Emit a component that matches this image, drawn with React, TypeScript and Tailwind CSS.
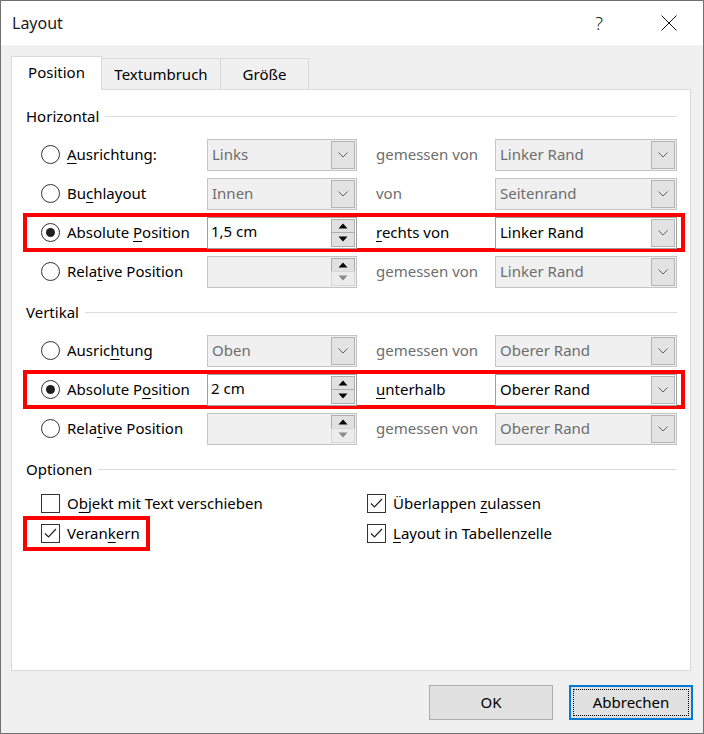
import React from "react";

// Kleine Helfer für die Dialog-Steuerelemente
function Mn({ t, k }: { t: string; k: number }) {
  return (
    <span>
      {t.slice(0, k)}
      <span className="underline decoration-1 underline-offset-[3px]">{t[k]}</span>
      {t.slice(k + 1)}
    </span>
  );
}

function Chevron() {
  return (
    <svg width="10" height="6" viewBox="0 0 10 6">
      <path d="M0.5 0.5 L5 5 L9.5 0.5" fill="none" stroke="#606060" strokeWidth="1" />
    </svg>
  );
}

function Tri({ up, color }: { up?: boolean; color: string }) {
  return (
    <svg width="10" height="6" viewBox="0 0 10 6">
      <path d={up ? "M0.5 5.5 L5 0.5 L9.5 5.5 Z" : "M0.5 0.5 L5 5.5 L9.5 0.5 Z"} fill={color} />
    </svg>
  );
}

function Radio({ checked }: { checked?: boolean }) {
  return (
    <div className="flex h-[19px] w-[19px] shrink-0 items-center justify-center rounded-full border border-[#333333] bg-white">
      {checked && <div className="h-[9px] w-[9px] rounded-full bg-[#1f1f1f]" />}
    </div>
  );
}

function Check({ checked }: { checked?: boolean }) {
  return (
    <div className="flex h-[19px] w-[19px] shrink-0 items-center justify-center border border-[#333333] bg-white">
      {checked && (
        <svg width="15" height="15" viewBox="0 0 15 15">
          <path d="M2 7.5 L5.5 11 L13 3" fill="none" stroke="#222222" strokeWidth="1.2" />
        </svg>
      )}
    </div>
  );
}

function Combo({ value, active, w }: { value: string; active?: boolean; w: string }) {
  return (
    <div
      className={`flex h-[32px] shrink-0 items-stretch border ${w} ${
        active ? "border-[#a0a0a0] bg-white text-black" : "border-[#c4c4c4] bg-[#f0f0f0] text-[#6d6d6d]"
      }`}
    >
      <span className="flex flex-1 items-center pl-[4px]">{value}</span>
      <div className="my-[1px] mr-[1px] flex w-[24px] items-center justify-center border border-[#b5b5b5] bg-[#e3e3e3]">
        <Chevron />
      </div>
    </div>
  );
}

function Spin({ value, disabled }: { value?: string; disabled?: boolean }) {
  return (
    <div
      className={`flex h-[32px] w-[150px] shrink-0 items-stretch border ${
        disabled ? "border-[#c4c4c4] bg-[#f0f0f0]" : "border-[#a0a0a0] bg-white"
      }`}
    >
      <span className="flex flex-1 items-center pb-[2px] pl-[3px] text-black">{value}</span>
      <div className="my-[1px] mr-[1px] flex w-[24px] flex-col">
        <div className="flex flex-1 items-center justify-center border border-[#adadad] bg-[#e1e1e1]">
          <Tri up color="#000000" />
        </div>
        <div
          className={`-mt-px flex flex-1 items-center justify-center border ${
            disabled ? "border-[#d6d6d6] bg-[#ececec]" : "border-[#adadad] bg-[#e1e1e1]"
          }`}
        >
          <Tri color={disabled ? "#8a8a8a" : "#000000"} />
        </div>
      </div>
    </div>
  );
}

function Row({
  hl,
  radio,
  label,
  field,
  label2,
  label2Active,
  field2,
}: {
  hl?: boolean;
  radio?: boolean;
  label: React.ReactNode;
  field: React.ReactNode;
  label2: React.ReactNode;
  label2Active?: boolean;
  field2: React.ReactNode;
}) {
  return (
    <div
      className={`ml-[11px] flex h-[39px] w-[662px] items-center border-4 ${
        hl ? "border-[#ff0000]" : "border-transparent"
      }`}
    >
      <div className="flex w-[180px] shrink-0 items-center gap-[7px] pl-[14px]">
        <Radio checked={radio} />
        <span className="whitespace-nowrap">{label}</span>
      </div>
      {field}
      <div
        className={`w-[138px] shrink-0 whitespace-nowrap pl-[19px] ${
          label2Active ? "text-black" : "text-[#6d6d6d]"
        }`}
      >
        {label2}
      </div>
      {field2}
    </div>
  );
}

function GroupHeader({ title, className }: { title: string; className?: string }) {
  return (
    <div className={`flex h-[22px] items-center pl-[14px] pr-[13px] ${className ?? ""}`}>
      <span>{title}</span>
      <div className="ml-[6px] h-px flex-1 bg-[#dcdcdc]" />
    </div>
  );
}

function CheckItem({ checked, label, hl }: { checked?: boolean; label: React.ReactNode; hl?: boolean }) {
  return (
    <div
      className={`flex h-[35px] items-center gap-[7px] border-4 pl-[14px] pr-[6px] ${
        hl ? "border-[#ff0000]" : "border-transparent"
      }`}
    >
      <Check checked={checked} />
      <span className="whitespace-nowrap">{label}</span>
    </div>
  );
}

export default function App() {
  return (
    <div className="flex h-[734px] w-[704px] flex-col border border-[#707070] bg-[#f0f0f0] font-['Noto_Sans',sans-serif] text-[15px] text-black">
      {/* Titelleiste */}
      <div className="flex h-[44px] shrink-0 items-center bg-white pl-[11px]">
        <span className="text-[16px] text-[#1a1a1a]">Layout</span>
        <span className="ml-auto text-[18px] font-light text-[#222222]">?</span>
        <div className="ml-[58px] mr-[26px]">
          <svg width="16" height="16" viewBox="0 0 16 16">
            <path d="M0.5 0.5 L15.5 15.5 M15.5 0.5 L0.5 15.5" stroke="#111111" strokeWidth="1" />
          </svg>
        </div>
      </div>

      {/* Registerkarten */}
      <div className="flex h-[44px] shrink-0 items-end pl-[10px]">
        <div className="relative z-10 -mb-px flex h-[34px] w-[91px] items-center justify-center border border-b-0 border-[#d9d9d9] bg-white pb-[2px]">
          Position
        </div>
        <div className="flex h-[31px] w-[119px] items-center justify-center border-t border-r border-[#d9d9d9]">
          Textumbruch
        </div>
        <div className="flex h-[31px] w-[88px] items-center justify-center border-t border-r border-[#d9d9d9]">
          Größe
        </div>
      </div>

      {/* Inhalt */}
      <div className="ml-[10px] h-[582px] w-[680px] shrink-0 border border-[#d9d9d9] bg-white pt-[15px]">
        <GroupHeader title="Horizontal" />
        <div className="mt-[8px]">
          <Row
            label={<Mn t="Ausrichtung:" k={0} />}
            field={<Combo value="Links" w="w-[150px]" />}
            label2="gemessen von"
            field2={<Combo value="Linker Rand" w="w-[182px]" />}
          />
          <Row
            label={<Mn t="Buchlayout" k={2} />}
            field={<Combo value="Innen" w="w-[150px]" />}
            label2="von"
            field2={<Combo value="Seitenrand" w="w-[182px]" />}
          />
          <Row
            hl
            radio
            label={<Mn t="Absolute Position" k={9} />}
            field={<Spin value="1,5 cm" />}
            label2={<Mn t="rechts von" k={0} />}
            label2Active
            field2={<Combo value="Linker Rand" active w="w-[182px]" />}
          />
          <Row
            label={<Mn t="Relative Position" k={4} />}
            field={<Spin disabled />}
            label2="gemessen von"
            field2={<Combo value="Linker Rand" w="w-[182px]" />}
          />
        </div>

        <GroupHeader title="Vertikal" className="mt-[10px]" />
        <div className="mt-[8px]">
          <Row
            label={<Mn t="Ausrichtung" k={6} />}
            field={<Combo value="Oben" w="w-[150px]" />}
            label2="gemessen von"
            field2={<Combo value="Oberer Rand" w="w-[182px]" />}
          />
          <Row
            hl
            radio
            label={<Mn t="Absolute Position" k={10} />}
            field={<Spin value="2 cm" />}
            label2={<Mn t="unterhalb" k={0} />}
            label2Active
            field2={<Combo value="Oberer Rand" active w="w-[182px]" />}
          />
          <Row
            label={<Mn t="Relative Position" k={4} />}
            field={<Spin disabled />}
            label2="gemessen von"
            field2={<Combo value="Oberer Rand" w="w-[182px]" />}
          />
        </div>

        <GroupHeader title="Optionen" className="mt-[10px]" />
        <div className="mt-[8px]">
          <div className="ml-[11px] flex h-[30px] items-center">
            <div className="w-[344px] shrink-0">
              <div className="inline-flex">
                <CheckItem label={<Mn t="Objekt mit Text verschieben" k={1} />} />
              </div>
            </div>
            <div className="flex items-center gap-[7px]">
              <Check checked />
              <Mn t="Überlappen zulassen" k={11} />
            </div>
          </div>
          <div className="ml-[11px] flex h-[30px] items-center">
            <div className="w-[344px] shrink-0">
              <div className="inline-flex">
                <CheckItem checked hl label={<Mn t="Verankern" k={5} />} />
              </div>
            </div>
            <div className="flex items-center gap-[7px]">
              <Check checked />
              <Mn t="Layout in Tabellenzelle" k={0} />
            </div>
          </div>
        </div>
      </div>

      {/* Schaltflächen */}
      <div className="mt-[14px] flex justify-end gap-[16px] pr-[10px]">
        <button className="flex h-[35px] w-[124px] items-center justify-center border border-[#adadad] bg-[#e1e1e1]">
          OK
        </button>
        <button className="flex h-[35px] w-[124px] items-stretch border-2 border-[#0078d7] bg-[#e1e1e1] p-[2px]">
          <span className="flex flex-1 items-center justify-center border border-dotted border-black">
            Abbrechen
          </span>
        </button>
      </div>
    </div>
  );
}
